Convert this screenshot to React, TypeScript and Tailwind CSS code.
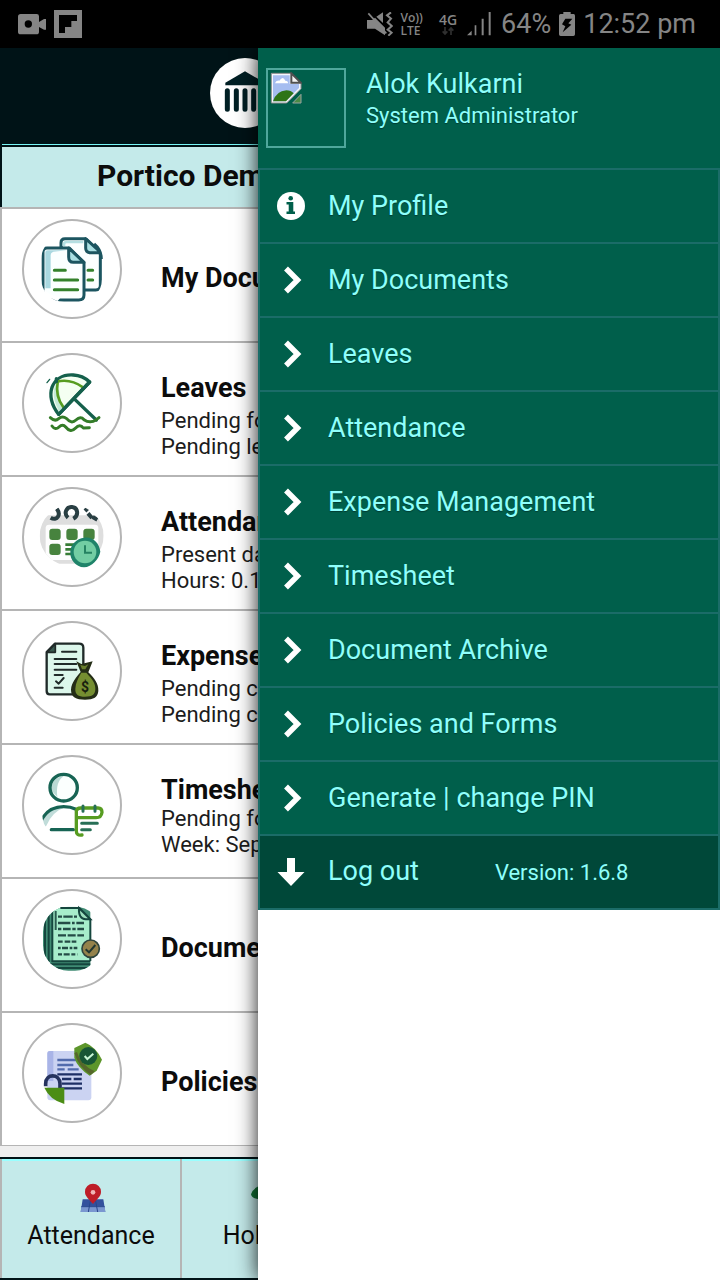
import type { ReactNode } from "react";
import clsx from "clsx";

const DocumentsIcon = () => (
  <CircleIcon>
    <clipPath id="docs">
      <rect x="58" y="51" width="182" height="198" rx="68" />
    </clipPath>
    <g clipPath="url(#docs)" fill="#fbffff" stroke="#1c5560" strokeWidth="9" strokeLinejoin="round">
      <path d="M117 85V71q0-12 12-12h62l44 46v94q0 14-14 14h-102V85z" />
      <path d="M126 82v-6q0-7 8-7h50" fill="none" stroke="#b5dfe2" strokeWidth="8" />
      <path d="M191 59v28q0 12 12 14h34z" fill="#a9dfe2" />
      <path d="M63 99q0-12 12-12h67l44 44v97q0 15-16 15H76q-13 0-13-12z" />
      <path d="M70 208V100q0-6 7-6h58l-41 4q-8 2-8 10v100z" fill="#a9d8e0" stroke="none" />
      <path d="M140 87v27q0 16 14 16h32z" fill="#a9dfe2" />
      <path d="M56 198q20 34 60 37l-16 20H50z" fill="#fff" stroke="none" />
      <path d="M97 154h33M97 183h70M97 212h70M198 154h14M198 183h14" stroke="#33812c" strokeLinecap="round" />
    </g>
    <path d="M217 74q22 18 22 46" fill="none" stroke="#1c5560" strokeWidth="7" />
  </CircleIcon>
);

const UmbrellaIcon = () => (
  <CircleIcon>
    <g fill="none" strokeLinecap="round" strokeLinejoin="round">
      <path d="M110 184C66 130 86 62 154 66c19 1 36 9 49 21z" fill="#f4fff2" stroke="#15604c" strokeWidth="10" />
      <path d="M108 168C90 134 92 104 106 88l16 82-12 6z" fill="#c5ead9" />
      <path d="M105 86q40-10 78 17M107 88q-8 43 18 76" stroke="#579c21" strokeWidth="8" />
      <path d="m110 184 93-97M156 137l67 64M103 77v9" stroke="#15604c" strokeWidth="10" />
      <path d="m75 89 8-10" stroke="#15604c" strokeWidth="4" />
      <path d="M85 194q14 13 25 3t24 0q14 17 28 4t24-1q18 13 37 0l8-6M90 219q10 14 21 3t20 0q15 19 29 4t24-1l18-1" stroke="#347c28" strokeWidth="9" />
    </g>
  </CircleIcon>
);

const CalendarIcon = () => (
  <CircleIcon>
    <clipPath id="calendar">
      <ellipse cx="149" cy="146" rx="96" ry="92" />
    </clipPath>
    <g clipPath="url(#calendar)">
      <path d="M53 85h192v145H53z" fill="#dedede" />
      <rect x="71" y="113" width="158" height="106" rx="10" fill="#fdfdfd" />
      <g fill="#47833e">
        <rect x="82" y="125" width="34" height="34" rx="9" />
        <rect x="133" y="125" width="34" height="34" rx="9" />
        <rect x="184" y="125" width="34" height="34" rx="9" />
        <rect x="82" y="170" width="34" height="34" rx="9" />
      </g>
      <path d="M130 173h29M130 187h22M130 201h25" stroke="#377c35" strokeWidth="8" />
      <g fill="none" stroke="#293f43" strokeWidth="12">
        <path d="M86 92c20 12 32-10 18-27M138 92c-15-14-3-34 13-32s21 25 3 35M189 72l9-9M198 79l12 14M212 90l14 8" />
      </g>
    </g>
    <path d="M187 152c24-5 46 16 48 42-5 24-25 45-49 47-25-2-43-23-41-47 1-22 18-39 42-42z" fill="#1f8369" />
    <circle cx="189" cy="195" r="34" fill="#72cda3" />
    <path d="M189 175v22h21" fill="none" stroke="#258262" strokeWidth="6" />
  </CircleIcon>
);

const ExpenseIcon = () => (
  <CircleIcon>
    <g stroke="#202a29" strokeLinecap="round" strokeLinejoin="round">
      <path d="M99 68h72q13 0 13 12v140H83q-9 0-9-10V93z" fill="#dcf7eb" strokeWidth="7" />
      <path d="M75 94h25V68z" fill="#38594e" strokeWidth="5" />
      <path d="M120 92h43M98 114h65M98 129h65M98 146h65M98 162h24M98 200h24M102 181l8 7 15-17" fill="none" strokeWidth="6" />
    </g>
    <path d="m163 121 15 8 34-8-13 33c19 19 31 34 30 56-2 19-13 26-40 26s-42-8-42-30c1-21 17-39 29-53z" fill="#242d16" />
    <path d="M178 155h15c18 20 28 32 27 50-1 17-9 22-31 22-20 0-30-7-29-24 1-18 8-31 18-48z" fill="#758e31" />
    <path d="m175 132 5 13h10l9-15-10 5z" fill="#687f2d" />
    <text x="189" y="213" textAnchor="middle" fontSize="42" fontWeight="700" fill="#18200e">$</text>
  </CircleIcon>
);

const TimesheetIcon = () => (
  <CircleIcon>
    <clipPath id="timesheet">
      <rect x="61" y="50" width="185" height="198" rx="68" />
    </clipPath>
    <g clipPath="url(#timesheet)" fill="none" strokeLinecap="round" strokeLinejoin="round">
      <ellipse cx="125" cy="98" rx="42" ry="41" fill="#fbfffe" />
      <path d="M88 106q0-38 38-43-26 15-20 64z" fill="#b9d9d4" />
      <ellipse cx="125" cy="98" rx="41" ry="40" stroke="#176454" strokeWidth="10" />
      <path d="M60 202q22-46 72-46-40 12-59 56l-10 8z" fill="#c0dcd9" />
      <path d="M55 202q21-47 70-47 21 0 37 8M88 224h66" stroke="#176454" strokeWidth="10" />
      <path d="M163 168q2-9 13-9h52q12 0 12 13-2 16-18 16h-59zm0 20v40q0 15 17 12" stroke="#579c21" strokeWidth="10" />
      <path d="M183 153v16M219 153v16M179 205h47M179 224h26" stroke="#276f56" strokeWidth="9" />
    </g>
  </CircleIcon>
);

const ArchiveIcon = () => (
  <CircleIcon>
    <clipPath id="archive">
      <rect x="63" y="53" width="172" height="192" rx="76" />
    </clipPath>
    <g clipPath="url(#archive)">
      <path d="M63 53h142v193H63z" fill="#3f8b73" />
      <path d="M91 55h80l34 35v126H91z" fill="#a7edcb" />
      <path d="M69 55v170M80 55v164M91 55v162h114M80 226h125M100 237h105" fill="none" stroke="#15463e" strokeWidth="6" />
      <path d="M101 66v57" stroke="#2a5a4f" strokeWidth="6" />
    </g>
    <path d="M115 57h57l33 34v125" fill="none" stroke="#15463e" strokeWidth="6" />
    <path d="M171 57q-2 33 20 34h14z" fill="#9ddfbd" stroke="#15463e" strokeWidth="6" />
    <g stroke="#244b46" strokeWidth="7">
      <path d="M108 83h57" strokeDasharray="12 4 28 4" />
      <path d="M108 102h78" strokeDasharray="37 5 8 5" />
      <path d="M108 120h78" strokeDasharray="10 5 23 5" />
      <path d="M108 139h78" strokeDasharray="24 5" />
      <path d="M108 158h58" strokeDasharray="14 6 17 4" />
      <path d="M108 177h58" strokeDasharray="8 4 18 5" />
      <path d="M108 196h58" strokeDasharray="12 5 18 5" />
    </g>
    <circle cx="206" cy="179" r="26" fill="#94824b" stroke="#2e443c" strokeWidth="5" />
    <path d="m191 181 10 9 19-22" fill="none" stroke="#21372f" strokeWidth="6" />
  </CircleIcon>
);

const PoliciesIcon = () => (
  <CircleIcon>
    <rect x="76" y="84" width="132" height="148" rx="9" fill="#cbd3f2" />
    <path d="M76 90q0-6 7-6h11v90H76z" fill="#a9b4e7" />
    <path d="M106 111h60M106 126h48M106 139h22M137 139h33" stroke="#526bad" strokeWidth="7" />
    <path d="M106 154h74M120 168h28M155 168h24M120 182h60M120 196h60" stroke="#1e2f65" strokeWidth="7" />
    <path d="M71 190v-8c0-31 42-31 43 0v15" fill="none" stroke="#26335e" strokeWidth="11" />
    <path d="M67 194h60v49q-44-13-60-49z" fill="#4b8d15" />
    <path d="m157 75 33-16q31 12 50 51l-16 33-21 15q-37-25-46-54z" fill="#5d962b" />
    <path d="M157 90q13 42 49 66l12-11q-43-20-53-58z" fill="#56672c" />
    <circle cx="199" cy="99" r="27" fill="#175635" />
    <path d="m188 99 8 9 18-16" fill="none" stroke="#c7f5d5" strokeWidth="6" />
  </CircleIcon>
);

function CircleIcon({ children }: { children: ReactNode }) {
  return (
    <svg viewBox="0 0 300 300" className="size-[100px] shrink-0" aria-hidden="true">
      <circle cx="150" cy="150" r="147" fill="#fff" stroke="#b5b5b5" strokeWidth="6" />
      {children}
    </svg>
  );
}

const ChevronIcon = () => (
  <svg viewBox="0 0 28 28" className="size-7 shrink-0" fill="none" stroke="#fff" strokeWidth="5.5" aria-hidden="true">
    <path d="m9 2.5 11.5 11.5L9 25.5" />
  </svg>
);

const InfoIcon = () => (
  <svg viewBox="0 0 28 28" className="size-7 shrink-0" aria-hidden="true">
    <circle cx="14" cy="14" r="14" fill="#fff" />
    <circle cx="13.7" cy="6.2" r="2.300" fill="#005f4b" />
    <path d="M9.500 10h6.800v9.500H18V22H9.500v-2.500h2.200v-7H9.500z" fill="#005f4b" />
  </svg>
);

const ArrowDownIcon = () => (
  <svg viewBox="0 0 28 28" className="size-7 shrink-0" fill="#fff" aria-hidden="true">
    <path d="M10 0h8v14h9.500L14 28 .5 14H10z" />
  </svg>
);

const BrokenImage = () => (
  <svg viewBox="0 0 96 96" className="size-8" role="img" aria-label="Profile photo">
    <path d="M4 4h60l29 29v17L50 93H4z" fill="#f4f6fb" stroke="#8d8d8d" strokeWidth="3" />
    <path d="M9 10h50v26h28v12L47 88H9z" fill="#a6bdf0" />
    <path d="M15 34q3-10 13-8 11-16 18 0 9 1 8 8z" fill="#fff" />
    <path d="M9 88q10-31 40-33 14 0 22 9L48 88z" fill="#2e7416" />
    <path d="M64 4v28h28z" fill="#f3f3f3" stroke="#4f4f4f" strokeWidth="6" />
    <path d="m68 93 25-26v26z" fill="#4b8a44" stroke="#9aa3a3" strokeWidth="3" />
  </svg>
);

const MapPinIcon = () => (
  <svg viewBox="0 0 78 90" className="ml-1 h-[30px] w-[26px]" aria-hidden="true">
    <path d="M8 49h62l6 38H2z" fill="#33519d" />
    <path d="M4 70h70l2 17H2z" fill="#7a97d0" />
    <path d="m25 87 7-38M53 87l-7-38M4 71h70" stroke="#27458b" strokeWidth="3" />
    <path d="M39 63C21 42 15 38 15 26a24 24 0 0 1 48 0c0 12-7 17-24 37z" fill="#be1d28" />
    <circle cx="39" cy="28" r="7" fill="#f0b5b5" />
  </svg>
);

const HolidayIcon = () => (
  <svg viewBox="0 0 120 90" className="h-[30px] w-10" aria-hidden="true">
    <path d="M0 34Q8 6 60 0q52 6 60 34 0 10-14 12-14-8-26-2-20 4-40 0-12-4-20 4-18-2-20-14z" fill="#127536" />
    <path d="M60 40v42" stroke="#6c4a22" strokeWidth="6" />
    <path d="M18 88q42-24 84 0z" fill="#7fb454" />
  </svg>
);

const modules = [
  { title: "My Documents", icon: <DocumentsIcon />, lines: [] },
  { title: "Leaves", icon: <UmbrellaIcon />, lines: ["Pending for", "Pending leaves"] },
  { title: "Attendance", icon: <CalendarIcon />, lines: ["Present days", "Hours: 0.1"] },
  { title: "Expense", icon: <ExpenseIcon />, lines: ["Pending claims", "Pending claims"] },
  { title: "Timesheet", icon: <TimesheetIcon />, lines: ["Pending for", "Week: Sep"], tight: true },
  { title: "Document", icon: <ArchiveIcon />, lines: [] },
  { title: "Policies", icon: <PoliciesIcon />, lines: [] },
];

const menu = [
  "My Profile",
  "My Documents",
  "Leaves",
  "Attendance",
  "Expense Management",
  "Timesheet",
  "Document Archive",
  "Policies and Forms",
  "Generate | change PIN",
];

const StatusBar = () => (
  <div className="flex h-12 items-center bg-black pr-6 pl-[18px] text-[#858585]">
    <svg viewBox="0 0 84 84" className="size-7" fill="#858585" aria-hidden="true">
      <path fillRule="evenodd" d="M8 12h48q7 0 7 7v46q0 8-8 8H8q-8 0-8-8V20q0-8 8-8zm23 19a11 11 0 1 0 0 22 11 11 0 0 0 0-22zM63 36l15-9h6v32h-6l-15-8z" />
    </svg>
    <svg viewBox="0 0 84 84" className="ml-2 size-7" aria-hidden="true">
      <path d="M0 0h84v84H0z" fill="#858585" />
      <path d="M15 15h54v18H52v18H33v18H15z" fill="#000" />
    </svg>
    <div className="ml-auto flex items-center">
      <svg viewBox="0 0 78 72" className="h-6 w-[26px]" fill="#858585" aria-hidden="true">
        <path d="M0 24h16l8-7 30 30v23L24 50H0zM28 14 48 1v32z" />
        <path d="m4 4 54 60" stroke="#858585" strokeWidth="5" />
        <path d="M72 1 60 10l12 10-10 11 12 11-12 11 12 9-10 9" fill="none" stroke="#858585" strokeWidth="6" />
      </svg>
      <div className="ml-2 font-['Open_Sans',sans-serif] text-[12px] leading-[13px] font-semibold">
        <div>Vo))</div>
        <div>LTE</div>
      </div>
      <div className="ml-4 flex flex-col items-center font-['Open_Sans',sans-serif] text-[14px] leading-[14px] font-semibold">
        4G
        <svg viewBox="0 0 36 24" className="h-2 w-3" fill="none" stroke="#303030" strokeWidth="5" aria-hidden="true">
          <path d="M9 0v20M2 13l7 8 7-8M27 24V4M20 11l7-8 7 8" />
        </svg>
      </div>
      <svg viewBox="0 0 72 72" className="ml-2.5 size-6" fill="#858585" aria-hidden="true">
        <path d="M0 70 14 56v14zM23 40h5v30h-5zM44 20h6v50h-6zM65 0h6v70h-6z" />
      </svg>
      <span className="ml-2.5 text-[27px] leading-8">64%</span>
      <svg viewBox="0 0 48 72" className="ml-2 h-6 w-4" aria-hidden="true">
        <path d="M13 0h22v6h9q4 0 4 5v56q0 5-5 5H5q-5 0-5-5V11q0-5 5-5h8z" fill="#858585" />
        <path d="M19 20h21L28 34l9 4-26 23 8-18-10-6z" fill="#000" />
      </svg>
      <time className="ml-2 text-[27px] leading-8">12:52 pm</time>
    </div>
  </div>
);

const Home = () => (
  <main className="flex min-w-0 flex-1 flex-col overflow-hidden bg-[#efefef] whitespace-nowrap">
    <header className="flex h-24 items-center bg-[#001317] pb-1.5 pl-[210px]">
      <svg viewBox="0 0 210 210" className="size-[70px] shrink-0" role="img" aria-label="Portico">
        <circle cx="105" cy="105" r="105" fill="#fff" />
        <path d="M46 82V74l59-34 59 34v8z" fill="#001f24" />
        <path d="M52 98v56M79 98v56M105 98v56M131 98v56M158 98v56" stroke="#001f24" strokeWidth="15" strokeLinecap="round" />
      </svg>
    </header>
    <h1 className="flex h-[63px] shrink-0 items-center border-l-2 border-[#001317] bg-[#c4eaea] pl-[95px] text-[30px] leading-9 font-bold shadow-[inset_0_1px_0_#77f7f7,inset_0_3px_0_#001317]">
      Portico Demo
    </h1>
    <ul className="border-y border-t-2 border-l-2 border-[#b5b5b5] bg-white">
      {modules.map((m, i) => (
        <li key={m.title} className={clsx("flex", i > 0 && "border-t-2 border-[#b5b5b5]")}>
          <a href="#" className="flex h-[132px] gap-[39px] pt-2.5 pl-5">
            {m.icon}
            <div className={clsx("flex flex-col justify-center", m.lines.length === 0 && "pb-1")}>
              <h2 className={clsx("text-[27px] font-bold", m.tight ? "leading-8" : "leading-10")}>{m.title}</h2>
              {m.lines.map((line, n) => (
                <p key={n} className="text-[22px] leading-[26px] text-[#1c1c1c]">
                  {line}
                </p>
              ))}
            </div>
          </a>
        </li>
      ))}
    </ul>
    <nav className="mt-auto flex border-y-2 border-[#001317] bg-[#c4eaea] text-[25px] leading-8 shadow-[inset_0_2px_0_#9ff]">
      <a href="#" className="flex h-[119px] w-[182px] shrink-0 flex-col items-center border-x-2 border-[#b5b5b5] pt-6">
        <MapPinIcon />
        <span className="mt-[7px]">Attendance</span>
      </a>
      <a href="#" className="flex h-[119px] w-[180px] shrink-0 flex-col items-center border-r-2 border-[#b5b5b5] pt-6">
        <HolidayIcon />
        <span className="mt-[7px]">Holidays</span>
      </a>
    </nav>
  </main>
);

const SidePanel = () => (
  <aside className="z-10 w-[462px] shrink-0 bg-white text-[27px] leading-8 text-[#8ffffb] shadow-[0_0_20px_rgba(0,0,0,0.9)] text-shadow-[0_1px_1px_#003d33]">
    <div className="flex h-[120px] gap-5 bg-[#005f4b] px-2 pt-5">
      <div className="size-20 border-2 border-[#4fa79b] p-0.5">
        <BrokenImage />
      </div>
      <div>
        <div>Alok Kulkarni</div>
        <div className="text-[22px]">System Administrator</div>
      </div>
    </div>
    <nav className="border-2 border-[#1b6c68] bg-[#005f4b]">
      {menu.map((label, i) => (
        <a key={label} href="#" className="flex h-[74px] items-center gap-[23px] border-b-2 border-[#1b6c68] pl-[17px]">
          {i === 0 ? <InfoIcon /> : <ChevronIcon />}
          {label}
        </a>
      ))}
      <button type="button" className="flex h-[72px] w-full items-center gap-[23px] bg-[#004839] pl-[17px]">
        <ArrowDownIcon />
        <span className="flex items-baseline gap-[76px]">
          Log out
          <span className="text-[22px]">Version: 1.6.8</span>
        </span>
      </button>
    </nav>
  </aside>
);

export default function App() {
  return (
    <div className="flex min-h-screen flex-col bg-white font-['Roboto',sans-serif] text-[#0c0c0c]">
      <div className="relative z-20">
        <StatusBar />
      </div>
      <div className="flex flex-1 overflow-hidden">
        <Home />
        <SidePanel />
      </div>
    </div>
  );
}
